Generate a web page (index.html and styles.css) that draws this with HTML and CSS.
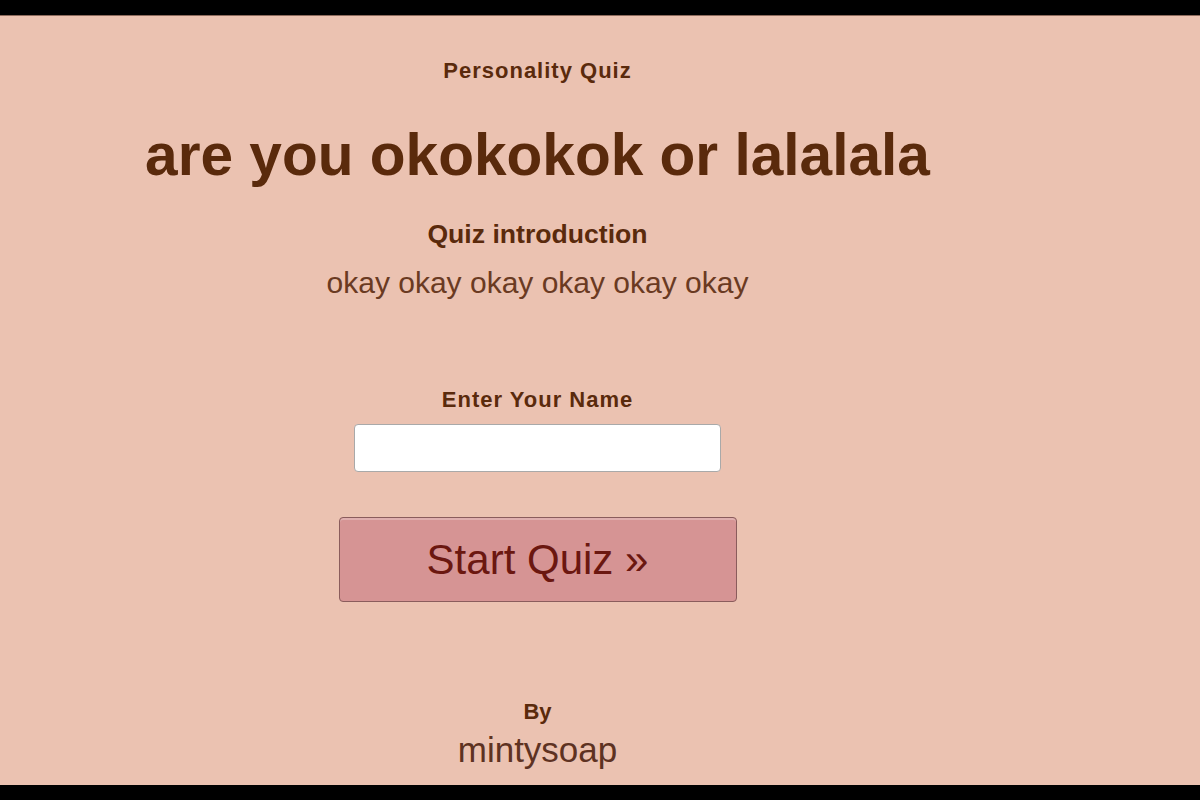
FILE: index.html
```html
<!DOCTYPE html>
<html lang="en">

<head>
    <meta charset="UTF-8">
    <title>Personality Quiz</title>
    <link rel="stylesheet" href="styles.css">
</head>

<body>
    <div id="frame">
        <!-- Quiz intro card -->
        <div id="quiz">
            <div class="quiz-type">Personality Quiz</div>
            <h1 class="quiz-title">are you okokokok or lalalala</h1>
            <h3 class="intro-heading">Quiz introduction</h3>
            <p class="intro-text">okay okay okay okay okay okay</p>

            <label class="name-label" for="nameInput">Enter Your Name</label>
            <input type="text" id="nameInput" class="name-input" />

            <button class="start-btn">Start Quiz &raquo;</button>

            <div class="by-label">By</div>
            <div class="author">mintysoap</div>
        </div>
    </div>
</body>

</html>
```

FILE: styles.css
```css
/* Basic reset */
body,
html {
    margin: 0;
    padding: 0;
    height: 100%;
    overflow: hidden;
    background: #000;
    font-family: "Liberation Sans", Arial, sans-serif;
}

/* Letterboxed frame */
#frame {
    margin-top: 15px;
    height: 770px;
    background-color: #ebc2b1;
    border-top: 1px solid #8c6a5c;
    box-sizing: border-box;
}

/* Centered quiz column */
#quiz {
    width: 1075px;
    display: flex;
    flex-direction: column;
    align-items: center;
    text-align: center;
    padding-top: 42px;
    color: #5a2a0c;
}

.quiz-type {
    font-size: 22px;
    line-height: 26px;
    font-weight: bold;
    letter-spacing: 1px;
}

.quiz-title {
    margin: 37px 0 0;
    font-size: 58.6px;
    line-height: 67px;
    font-weight: bold;
}

.intro-heading {
    margin: 31px 0 0;
    font-size: 26.6px;
    line-height: 30px;
    font-weight: bold;
}

.intro-text {
    margin: 16px 0 0;
    font-size: 30px;
    line-height: 36px;
    color: #6a3a22;
}

.name-label {
    margin-top: 86px;
    font-size: 22px;
    line-height: 26px;
    font-weight: bold;
    letter-spacing: 1px;
}

/* Name input */
.name-input {
    margin-top: 11px;
    width: 367px;
    height: 48px;
    box-sizing: border-box;
    border: 1px solid #a9a9a9;
    border-radius: 4px;
    background: #fff;
    font-size: 20px;
    padding: 0 10px;
}

/* Start button */
.start-btn {
    margin-top: 45px;
    width: 398px;
    height: 85px;
    border: 1px solid #8a5c5c;
    border-radius: 4px;
    background-color: #d69494;
    box-shadow: inset 0 2px 0 rgba(255, 255, 255, 0.25);
    color: #6b1710;
    font-family: "Liberation Sans", Arial, sans-serif;
    font-size: 42px;
    cursor: pointer;
}

.by-label {
    margin-top: 97px;
    font-size: 22px;
    line-height: 26px;
    font-weight: bold;
}

.author {
    margin-top: 6px;
    font-size: 35px;
    line-height: 38px;
    color: #5e3222;
}
```
